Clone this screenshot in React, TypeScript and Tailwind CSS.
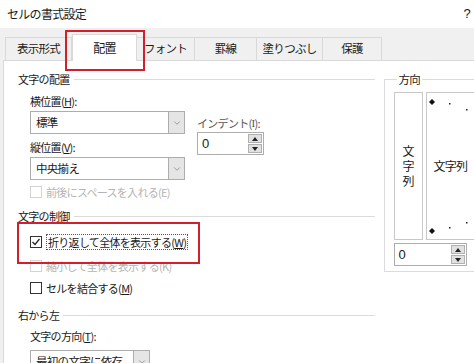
import { ChevronDown } from "lucide-react";

const tabs = [
  { label: "表示形式", w: "w-[67px]" },
  { label: "配置", w: "w-[65px]", active: true },
  { label: "フォント", w: "w-[59px]" },
  { label: "罫線", w: "w-[63px]" },
  { label: "塗りつぶし", w: "w-[67px]" },
  { label: "保護", w: "w-[60px]" },
];

function Header({ text }: { text: string }) {
  return (
    <div className="flex items-center h-[16px] gap-[4px] pr-[1px]">
      <span>{text}</span>
      <div className="flex-1 h-px bg-[#dcdcdc]" />
    </div>
  );
}

function Dropdown({ value, w }: { value: string; w: string }) {
  return (
    <div className={`flex h-[23px] ${w} border border-[#adadad] bg-white`}>
      <div className="flex-1 flex items-center pl-[5px] text-[11.5px]">{value}</div>
      <div className="w-[16px] flex items-center justify-center bg-[#e5e5e5] border-l border-[#adadad]">
        <ChevronDown className="w-[10px] h-[10px] text-[#707070]" strokeWidth={1.5} />
      </div>
    </div>
  );
}

function Spin({ w }: { w: string }) {
  return (
    <div className={`flex h-[23px] ${w} border border-[#adadad] bg-white`}>
      <div className="flex-1 flex items-center pl-[4px] font-['Liberation_Sans',sans-serif] text-[13px]">0</div>
      <div className="w-[14px] my-[1px] mr-[1px] flex flex-col gap-px">
        <div className="flex-1 flex items-center justify-center bg-[#e1e1e1] border border-[#b0b0b0]">
          <svg width="6" height="4" viewBox="0 0 6 4"><path d="M0 4 L3 0 L6 4 Z" fill="#222" /></svg>
        </div>
        <div className="flex-1 flex items-center justify-center bg-[#e1e1e1] border border-[#b0b0b0]">
          <svg width="6" height="4" viewBox="0 0 6 4"><path d="M0 0 L3 4 L6 0 Z" fill="#222" /></svg>
        </div>
      </div>
    </div>
  );
}

function Check({
  children,
  checked,
  disabled,
  focus,
}: {
  children: React.ReactNode;
  checked?: boolean;
  disabled?: boolean;
  focus?: boolean;
}) {
  return (
    <div className={`flex items-center h-[16px] gap-[4px] ${disabled ? "text-[#b4b4b4]" : ""}`}>
      <div
        className={`w-[12px] h-[12px] border flex items-center justify-center bg-white ${
          disabled ? "border-[#d4d4d4]" : "border-[#333]"
        }`}
      >
        {checked && (
          <svg width="10" height="10" viewBox="0 0 10 10">
            <path d="M1.5 5 L4 7.5 L8.5 2" stroke="#222" strokeWidth="1.2" fill="none" />
          </svg>
        )}
      </div>
      <span className={focus ? "px-px border border-dotted border-[#555] leading-[14px]" : ""}>{children}</span>
    </div>
  );
}

export default function App() {
  return (
    <div className="relative w-[474px] h-[363px] overflow-hidden bg-white text-[11px] text-[#1a1a1a] tracking-[-0.7px] font-['Noto_Sans_CJK_JP',sans-serif]">
      <div className="h-[28px] flex items-center justify-between pl-[7px] pr-[4px]">
        <span className="text-[12px]">セルの書式設定</span>
        <span className="font-['Liberation_Sans',sans-serif] text-[13px]">?</span>
      </div>

      <div className="h-[335px] bg-[#f0f0f0] pl-[3px] pt-[6px]">
        <div className="flex items-end h-[26px] pl-[2px] text-[11.5px]">
          {tabs.map((t) =>
            t.active ? (
              <div
                key={t.label}
                className={`${t.w} h-[27px] -mb-px relative z-10 flex items-center justify-center bg-white border border-b-0 border-[#d9d9d9] text-[12px]`}
              >
                {t.label}
              </div>
            ) : (
              <div
                key={t.label}
                className={`${t.w} h-[23px] -ml-px first:ml-0 flex items-center justify-center bg-[#f0f0f0] border border-b-0 border-[#d9d9d9]`}
              >
                {t.label}
              </div>
            )
          )}
        </div>

        <div className="h-[320px] w-[490px] bg-white border border-[#d9d9d9] flex">
          {/* left column */}
          <div className="w-[377px] pl-[14px] pt-[10px] flex flex-col">
            <Header text="文字の配置" />
            <div className="ml-[12px] flex flex-col">
              <div className="mt-[6px] h-[16px] flex items-center">
                横位置(<u>H</u>):
              </div>
              <div className="flex">
                <div className="flex flex-col">
                  <div className="mt-[2px]">
                    <Dropdown value="標準" w="w-[155px]" />
                  </div>
                  <div className="mt-[5px] h-[16px] flex items-center">
                    縦位置(<u>V</u>):
                  </div>
                  <div className="mt-[2px]">
                    <Dropdown value="中央揃え" w="w-[155px]" />
                  </div>
                </div>
                <div className="ml-[12px] flex flex-col">
                  <div className="mt-[6px] h-[16px] flex items-center text-[#555]">
                    インデント(<span className="font-['Liberation_Serif',serif]">I</span>):
                  </div>
                  <div className="mt-px">
                    <Spin w="w-[67px]" />
                  </div>
                </div>
              </div>
              <div className="mt-[4px]">
                <Check disabled>前後にスペースを入れる(E)</Check>
              </div>
            </div>

            <div className="mt-[8px]">
              <Header text="文字の制御" />
            </div>
            <div className="ml-[12px] flex flex-col">
              <div className="mt-[10px]">
                <Check checked focus>
                  折り返して全体を表示する(<u>W</u>)
                </Check>
              </div>
              <div className="mt-[8px]">
                <Check disabled>縮小して全体を表示する(K)</Check>
              </div>
              <div className="mt-[6px]">
                <Check>
                  セルを結合する(<u>M</u>)
                </Check>
              </div>
            </div>

            <div className="mt-[11px]">
              <Header text="右から左" />
            </div>
            <div className="ml-[12px] flex flex-col">
              <div className="mt-[5px] h-[16px] flex items-center">
                文字の方向(<u>T</u>):
              </div>
              <div className="mt-[6px]">
                <Dropdown value="最初の文字に依存" w="w-[120px]" />
              </div>
            </div>
          </div>

          {/* right column: orientation */}
          <fieldset className="ml-[8px] mt-[10px] w-[110px] h-[201px] border border-[#dcdcdc] pl-[9px] pt-[5px] self-start">
            <legend className="ml-[3px] px-[2px] leading-[16px] text-[11.5px]">方向</legend>
            <div className="flex gap-[3px]">
              <div className="w-[29px] h-[148px] border border-[#c8c8c8] flex items-center justify-center text-[12px]">
                <span className="[writing-mode:vertical-rl] tracking-[3px] leading-[16px] pt-[3px]">文字列</span>
              </div>
              <div className="relative w-[60px] h-[148px] border border-[#c8c8c8] flex items-center pl-[7px] text-[12px]">
                <svg className="absolute left-0 top-0" width="60" height="148" viewBox="0 0 60 148">
                  <path d="M5 6 L8 9 L5 12 L2 9 Z" fill="#111" />
                  <rect x="22" y="10" width="1.5" height="1.5" fill="#222" />
                  <rect x="39" y="16" width="1.5" height="1.5" fill="#222" />
                  <path d="M5 135 L8 138 L5 141 L2 138 Z" fill="#111" />
                  <rect x="22" y="134" width="1.5" height="1.5" fill="#222" />
                  <rect x="39" y="129" width="1.5" height="1.5" fill="#222" />
                </svg>
                <span className="relative">文字列</span>
              </div>
            </div>
            <div className="mt-[3px]">
              <Spin w="w-[73px]" />
            </div>
          </fieldset>
        </div>
      </div>

      {/* red highlight boxes */}
      <div className="absolute left-[65px] top-[30px] w-[80px] h-[41px] border-2 border-[#d31f2b] z-20" />
      <div className="absolute left-[17px] top-[222px] w-[183px] h-[42px] border-2 border-[#d31f2b] z-20" />
    </div>
  );
}
